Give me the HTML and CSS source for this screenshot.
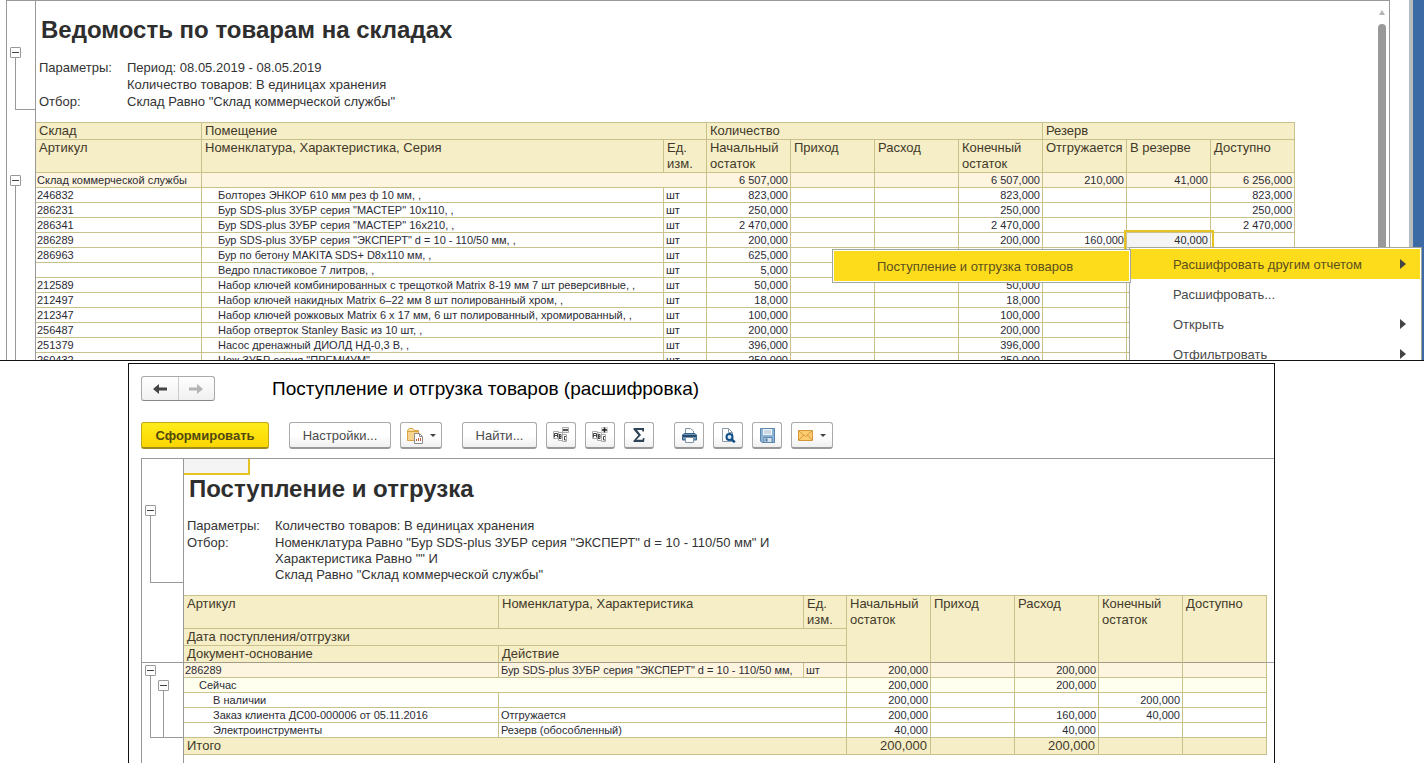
FILE: index.html
```html
<!DOCTYPE html>
<html lang="ru">
<head>
<meta charset="utf-8">
<title>Ведомость по товарам на складах</title>
<link rel="stylesheet" href="styles.css">
</head>
<body>
<section class="pane">
  <div class="frame">
    <div class="gutter gutter-main">
      <div class="group group-params"><button class="toggle" aria-label="Свернуть параметры"></button><span class="bracket bracket-closed"></span></div>
      <div class="group group-rows"><button class="toggle" aria-label="Свернуть склад"></button><span class="bracket"></span></div>
    </div>
    <div class="sheet sheet-main">
      <h1 class="title">Ведомость по товарам на складах</h1>
      <dl class="params">
        <dt>Параметры:</dt><dd>Период: 08.05.2019 - 08.05.2019</dd>
        <dt></dt><dd>Количество товаров: В единицах хранения</dd>
        <dt>Отбор:</dt><dd>Склад Равно "Склад коммерческой службы"</dd>
      </dl>
      <table class="grid">
        <colgroup><col class="c-art"><col><col class="c-unit"><col class="c-num"><col class="c-num"><col class="c-num"><col class="c-num"><col class="c-num"><col class="c-num"><col class="c-num"></colgroup>
        <thead>
          <tr><th>Склад</th><th colspan="2">Помещение</th><th colspan="4">Количество</th><th colspan="3">Резерв</th></tr>
          <tr class="tall"><th>Артикул</th><th>Номенклатура, Характеристика, Серия</th><th>Ед. изм.</th><th>Начальный остаток</th><th>Приход</th><th>Расход</th><th>Конечный остаток</th><th>Отгружается</th><th>В резерве</th><th>Доступно</th></tr>
        </thead>
        <tbody>
          <tr class="sum"><td>Склад коммерческой службы</td><td colspan="2"></td><td class="n">6 507,000</td><td></td><td></td><td class="n">6 507,000</td><td class="n">210,000</td><td class="n">41,000</td><td class="n">6 256,000</td></tr>
          <tr><td>246832</td><td class="in">Болторез ЭНКОР 610 мм рез ф 10 мм, ,</td><td>шт</td><td class="n">823,000</td><td></td><td></td><td class="n">823,000</td><td></td><td></td><td class="n">823,000</td></tr>
          <tr><td>286231</td><td class="in">Бур SDS-plus ЗУБР серия "МАСТЕР" 10х110, ,</td><td>шт</td><td class="n">250,000</td><td></td><td></td><td class="n">250,000</td><td></td><td></td><td class="n">250,000</td></tr>
          <tr><td>286341</td><td class="in">Бур SDS-plus ЗУБР серия "МАСТЕР" 16х210, ,</td><td>шт</td><td class="n">2 470,000</td><td></td><td></td><td class="n">2 470,000</td><td></td><td></td><td class="n">2 470,000</td></tr>
          <tr><td>286289</td><td class="in">Бур SDS-plus ЗУБР серия "ЭКСПЕРТ" d = 10 - 110/50 мм, ,</td><td>шт</td><td class="n">200,000</td><td></td><td></td><td class="n">200,000</td><td class="n">160,000</td><td class="n current">40,000</td><td></td></tr>
          <tr><td>286963</td><td class="in">Бур по бетону MAKITA SDS+ D8x110 мм, ,</td><td>шт</td><td class="n">625,000</td><td></td><td></td><td class="n">625,000</td><td></td><td></td><td></td></tr>
          <tr><td></td><td class="in">Ведро пластиковое 7 литров, ,</td><td>шт</td><td class="n">5,000</td><td></td><td></td><td class="n">5,000</td><td></td><td></td><td></td></tr>
          <tr><td>212589</td><td class="in">Набор ключей комбинированных с трещоткой Matrix 8-19 мм 7 шт реверсивные, ,</td><td>шт</td><td class="n">50,000</td><td></td><td></td><td class="n">50,000</td><td></td><td></td><td></td></tr>
          <tr><td>212497</td><td class="in">Набор ключей накидных Matrix 6–22 мм 8 шт полированный хром, ,</td><td>шт</td><td class="n">18,000</td><td></td><td></td><td class="n">18,000</td><td></td><td></td><td></td></tr>
          <tr><td>212347</td><td class="in">Набор ключей рожковых Matrix 6 х 17 мм, 6 шт полированный, хромированный, ,</td><td>шт</td><td class="n">100,000</td><td></td><td></td><td class="n">100,000</td><td></td><td></td><td></td></tr>
          <tr><td>256487</td><td class="in">Набор отверток Stanley Basic из 10 шт, ,</td><td>шт</td><td class="n">200,000</td><td></td><td></td><td class="n">200,000</td><td></td><td></td><td></td></tr>
          <tr><td>251379</td><td class="in">Насос дренажный ДИОЛД НД-0,3 В, ,</td><td>шт</td><td class="n">396,000</td><td></td><td></td><td class="n">396,000</td><td></td><td></td><td></td></tr>
          <tr><td>260432</td><td class="in">Нож ЗУБР серия "ПРЕМИУМ"</td><td>шт</td><td class="n">250,000</td><td></td><td></td><td class="n">250,000</td><td></td><td></td><td></td></tr>
        </tbody>
      </table>
    </div>
    <div class="scroll"><svg width="8" height="5" viewBox="0 0 8 5"><path d="M4 0 7 5H1z" fill="#b4b4b4"/></svg><span class="thumb"></span></div>
  </div>
  <div class="desktop"></div>

  <div class="menu context">
    <button class="item active">Расшифровать другим отчетом<svg class="more" width="6" height="10" viewBox="0 0 6 10"><path d="M0 0 6 5 0 10z"/></svg></button>
    <button class="item">Расшифровать...</button>
    <button class="item">Открыть<svg class="more" width="6" height="10" viewBox="0 0 6 10"><path d="M0 0 6 5 0 10z"/></svg></button>
    <button class="item">Отфильтровать<svg class="more" width="6" height="10" viewBox="0 0 6 10"><path d="M0 0 6 5 0 10z"/></svg></button>
  </div>
  <div class="menu submenu">
    <button class="item active">Поступление и отгрузка товаров</button>
  </div>
</section>

<section class="window">
  <header class="head">
    <div class="nav">
      <button aria-label="Назад"><svg width="14" height="10" viewBox="0 0 14 10"><path d="M0 5 6 0v3.500h8v3H6V10z" fill="#444"/></svg></button>
      <button aria-label="Вперед"><svg width="14" height="10" viewBox="0 0 14 10"><path d="M14 5 8 0v3.500H0v3h8V10z" fill="#b4b4b4"/></svg></button>
    </div>
    <h2 class="caption">Поступление и отгрузка товаров (расшифровка)</h2>
  </header>
  <div class="toolbar">
    <div class="set"><button class="btn primary">Сформировать</button></div>
    <div class="set">
      <button class="btn settings">Настройки...</button>
      <button class="btn drop" aria-label="Варианты отчета">
        <svg width="17" height="17" viewBox="0 0 17 17"><path d="M1.500 13.500v-10l1.500-2h4l1.500 2h4v2" fill="#f6d48d" stroke="#d9a441"/><path d="M1.500 4.500h11v9h-11z" fill="#f6d48d" stroke="#d9a441"/><path d="M3 2.500h4" stroke="#fff3d0"/><path d="M8.500 6.500h5l3 3v7h-8z" fill="#fff" stroke="#8b8b8b"/><path d="M13.500 6.500v3h3" fill="none" stroke="#8b8b8b"/><path d="M10.500 14v-2M12.500 14v-3M14.500 14v-3" stroke="#c45b3c"/></svg>
        <svg width="6" height="3" viewBox="0 0 6 3"><path d="M0 0h6L3 3z" fill="#444"/></svg>
      </button>
    </div>
    <div class="set">
      <button class="btn find">Найти...</button>
      <button class="btn icon" aria-label="Свернуть группы"><svg width="16" height="16" viewBox="0 0 16 16"><g fill="#fff" stroke="#aaa"><path d="M.5 4.500h5v7h-5zM5.500 5.500h4v8h-4zM9.500 7.500h4v7h-4z"/><path d="M9.500.5h6v5h-6z" fill="#eee"/></g><path d="M10 3h5" stroke="#222" stroke-width="1.500"/><path d="M1.500 10.500v-4h3v4M1.500 8.500h3M6.500 7v5M6.500 7.500H8v4H6.500M6.500 9.500H8M13 9.500h-1.500v3.500H13" fill="none" stroke="#444"/></svg></button>
      <button class="btn icon" aria-label="Развернуть группы"><svg width="16" height="16" viewBox="0 0 16 16"><g fill="#fff" stroke="#aaa"><path d="M.5 4.500h5v7h-5zM5.500 5.500h4v8h-4zM9.500 7.500h4v7h-4z"/><path d="M9.500.5h6v5h-6z" fill="#eee" stroke="#ccc"/></g><path d="M10 3h5M12.500.5v5" stroke="#222" stroke-width="1.500"/><path d="M1.500 10.500v-4h3v4M1.500 8.500h3M6.500 7v5M6.500 7.500H8v4H6.500M6.500 9.500H8M13 9.500h-1.500v3.500H13" fill="none" stroke="#444"/></svg></button>
      <button class="btn icon" aria-label="Сумма"><svg width="12" height="14" viewBox="0 0 12 14"><path d="M.5 0H11v3.500H9.500L9 2H4l4 5-4.500 4.700H9.500l.5-1.700h1.500L11 14H.5v-1.300L5.300 7.200.5 1.500z" fill="#2f4457"/></svg></button>
    </div>
    <div class="set">
      <button class="btn icon" aria-label="Печать"><svg width="15" height="15" viewBox="0 0 15 15"><path d="M3.500 6V.5h5l3 2.500v3" fill="#fff" stroke="#7d93a6"/><path d="M2 5.500h11l1.500 1.500v5H.5V7z" fill="#6d97bb" stroke="#35618a"/><path d="M1 8h13" stroke="#27496b" stroke-width="2"/><path d="M3.500 9.500h8v5h-8z" fill="#fff" stroke="#7d93a6"/></svg></button>
      <button class="btn icon" aria-label="Просмотр"><svg width="15" height="15" viewBox="0 0 15 15"><path d="M1.500.5h6l4 4v9h-10z" fill="#fff" stroke="#8a9aa8"/><path d="M7.500.5v4h4" fill="none" stroke="#8a9aa8"/><circle cx="8.500" cy="9" r="3" fill="#d8eefa" stroke="#0f4f86" stroke-width="2"/><path d="m10.800 11.300 3 3" stroke="#0f4f86" stroke-width="2.400"/></svg></button>
      <button class="btn icon" aria-label="Сохранить"><svg width="15" height="15" viewBox="0 0 15 15"><path d="M.5.500h14v14H2l-1.500-1.500z" fill="#8db3d4" stroke="#5a86ad"/><path d="M3 1h9v6H3z" fill="#eef5fb"/><path d="M4 3h7M4 5h7" stroke="#a9bccd"/><path d="M4 9.500h8v5H4z" fill="#d7e4ef" stroke="#5a86ad"/><path d="M5.500 10.500h2v3h-2z" fill="#47759f"/></svg></button>
      <button class="btn drop" aria-label="Отправить">
        <svg width="15" height="11" viewBox="0 0 15 11"><path d="M.5.500h14v10H.5z" fill="#fbcd70" stroke="#d8963a"/><path d="m1 1 6.500 5.500L14 1M1 10l4.500-5M14 10 9.500 5" fill="none" stroke="#d8963a"/></svg>
        <svg width="6" height="3" viewBox="0 0 6 3"><path d="M0 0h6L3 3z" fill="#444"/></svg>
      </button>
    </div>
  </div>
  <div class="report">
    <div class="gutter gutter-detail">
      <div class="frozen"><div class="group"><button class="toggle" aria-label="Свернуть параметры"></button><span class="bracket bracket-closed"></span></div></div>
      <div class="levels">
        <div class="group level-one"><button class="toggle" aria-label="Свернуть товар"></button><span class="bracket bracket-closed"></span></div>
        <div class="group level-two"><button class="toggle" aria-label="Свернуть дату"></button><span class="bracket bracket-closed"></span></div>
      </div>
    </div>
    <div class="sheet sheet-detail">
      <div class="corner"></div>
      <h1 class="title">Поступление и отгрузка</h1>
      <dl class="params">
        <dt>Параметры:</dt><dd>Количество товаров: В единицах хранения</dd>
        <dt>Отбор:</dt><dd class="multi">Номенклатура Равно "Бур SDS-plus ЗУБР серия "ЭКСПЕРТ" d = 10 - 110/50 мм" И<br>Характеристика Равно "" И<br>Склад Равно "Склад коммерческой службы"</dd>
      </dl>
      <table class="grid detail">
        <colgroup><col class="c-doc"><col><col class="c-unit"><col class="c-num"><col class="c-num"><col class="c-num"><col class="c-num"><col class="c-num"></colgroup>
        <thead>
          <tr class="tall"><th>Артикул</th><th>Номенклатура, Характеристика</th><th>Ед. изм.</th><th rowspan="3" class="edge">Начальный остаток</th><th rowspan="3" class="edge">Приход</th><th rowspan="3" class="edge">Расход</th><th rowspan="3" class="edge">Конечный остаток</th><th rowspan="3" class="edge last">Доступно</th></tr>
          <tr><th colspan="3">Дата поступления/отгрузки</th></tr>
          <tr><th class="edge">Документ-основание</th><th class="edge" colspan="2">Действие</th></tr>
        </thead>
        <tbody>
          <tr class="sum"><td>286289</td><td>Бур SDS-plus ЗУБР серия "ЭКСПЕРТ" d = 10 - 110/50 мм,</td><td>шт</td><td class="n">200,000</td><td></td><td class="n">200,000</td><td></td><td></td></tr>
          <tr class="date"><td class="in" colspan="3">Сейчас</td><td class="n">200,000</td><td></td><td class="n">200,000</td><td></td><td></td></tr>
          <tr><td class="in2">В наличии</td><td colspan="2"></td><td class="n">200,000</td><td></td><td></td><td class="n">200,000</td><td></td></tr>
          <tr><td class="in2">Заказ клиента ДС00-000006 от 05.11.2016</td><td colspan="2">Отгружается</td><td class="n">200,000</td><td></td><td class="n">160,000</td><td class="n">40,000</td><td></td></tr>
          <tr><td class="in2">Электроинструменты</td><td colspan="2">Резерв (обособленный)</td><td class="n">40,000</td><td></td><td class="n">40,000</td><td></td><td></td></tr>
        </tbody>
        <tfoot>
          <tr><th colspan="3">Итого</th><th class="n">200,000</th><th></th><th class="n">200,000</th><th></th><th></th></tr>
        </tfoot>
      </table>
    </div>
  </div>
</section>
</body>
</html>
```
FILE: styles.css
```css
* { box-sizing: border-box; }

body {
  margin: 0;
  height: 100vh;
  display: grid;
  grid-template-rows: minmax(0, 1fr) auto;
  overflow: hidden;
  background: #fff;
  color: #333;
  font-family: "Liberation Sans", Arial, sans-serif;
  font-size: 13px;
}

button { font: inherit; color: inherit; padding: 0; margin: 0; }
svg { display: block; flex: none; }

/* Upper report pane */
.pane {
  position: relative;
  display: flex;
  overflow: hidden;
  padding-left: 6px;
  border-bottom: 1px solid #111;
}
.frame {
  flex: 1;
  min-width: 0;
  display: flex;
  border: 1px solid #999;
  border-bottom: 0;
  margin-right: 19px;
}
.desktop { width: 15px; background: #3b6aa5; border-left: 4px solid #b9bcbe; }

.sheet { flex: 1; min-width: 0; }
.sheet-main { padding-right: 83px; }
.title { margin: 0; padding-left: 5px; font-size: 24px; line-height: 28px; color: #2e2e2e; white-space: nowrap; }
.sheet-main .title { padding-top: 15px; margin-bottom: 15px; }

.params { margin: 0 0 12px; padding-left: 3px; display: grid; grid-template-columns: 88px 1fr; font-size: 13px; line-height: 17px; white-space: nowrap; }
.params dt, .params dd { margin: 0; }
.params .multi { padding-top: 1px; line-height: 16px; }

/* Outline gutter */
.gutter { flex: none; border-right: 1px solid #999; }
.gutter-main { width: 29px; padding: 46px 0 0 3px; display: flex; flex-direction: column; }
.group { display: flex; flex-direction: column; }
.group-params { height: 63px; }
.group-rows { flex: 1; margin-top: 65px; }
.toggle {
  width: 11px;
  height: 11px;
  flex: none;
  border: 1px solid #999;
  border-radius: 1px;
  background: linear-gradient(#444, #444) center / 7px 1px no-repeat #fff;
}
.bracket { flex: 1; margin-left: 5px; border-left: 1px solid #999; }
.bracket-closed { border-bottom: 1px solid #999; }

/* Spreadsheet grid */
.grid { width: 100%; table-layout: fixed; border-collapse: separate; border-spacing: 0; border-top: 1px solid #c9c18c; }
.c-art { width: 166px; }
.c-doc { width: 315px; }
.c-unit { width: 43px; }
.c-num { width: 84px; }
.grid th, .grid td { border-right: 1px solid #c9c18c; border-bottom: 1px solid #c9c18c; text-align: left; vertical-align: top; }
.grid th { height: 17px; padding: 0 0 0 3px; background: #f5eec6; color: #43392a; font-size: 13px; font-weight: 400; line-height: 16px; }
.grid .tall th { height: 33px; }
.grid td { height: 15px; padding: 0 2px 0 1px; font-size: 11px; line-height: 14px; color: #2b2b33; white-space: nowrap; }
.grid .sum td { background: #fdf5df; }
.grid .date td { background: #fffff0; }
.grid td + td:not(.n) { padding-left: 2px; }
.grid td + td.in { padding-left: 16px; }
.grid .in { padding-left: 15px; }
.grid .in2 { padding-left: 29px; }
.grid td.n { text-align: right; }
.grid th.n { text-align: right; padding-right: 3px; }
.grid .current { background: #f4f4f4; outline: 2px solid #e6c322; outline-offset: 1px; }
.grid .edge { border-bottom-color: #a39c86; }
.grid .last { position: relative; }
.grid .last::after { content: ""; position: absolute; left: 100%; bottom: -1px; width: 8px; border-bottom: 1px solid #a3a0a8; }

.scroll { width: 11px; padding: 9px 3px 0 0; display: flex; flex-direction: column; gap: 9px; }
.thumb { flex: 1; background: #999; border-radius: 4px 4px 0 0; }

/* Context menus */
.menu { position: absolute; padding: 1px; border: 1px solid #a3a79b; background: #fff; }
.context { top: 247px; right: 2px; width: 293px; }
.submenu { top: 249px; right: 293px; width: 299px; }
.item { display: flex; align-items: center; width: 100%; height: 30px; padding: 0 14px 0 42px; border: 0; background: none; color: #4a4a4a; text-align: left; white-space: nowrap; }
.item.active { background: #fddc1b; color: #5c4f1e; }
.submenu .item { padding-left: 43px; }
.more { margin-left: auto; fill: #444; }

/* Drill-down window */
.window { margin: 2px 149px 0 128px; padding: 12px 0 0 12px; border: 1px solid #111; border-bottom: 0; }
.head { display: flex; align-items: center; gap: 57px; height: 25px; }
.nav { display: flex; width: 74px; height: 25px; border: 1px solid #aaa; border-bottom-color: #888; border-radius: 3px; background: linear-gradient(#fff, #f0f0f0); }
.nav button { flex: 1; display: flex; align-items: center; justify-content: center; border: 0; background: none; }
.nav button + button { border-left: 1px solid #ccc; }
.caption { margin: 0; font-size: 19px; font-weight: 400; color: #000; white-space: nowrap; }

.toolbar { display: flex; gap: 20px; margin: 21px 0 9px; }
.set { display: flex; gap: 9px; }
.btn { height: 27px; display: flex; align-items: center; justify-content: center; border: 1px solid #aaa; border-bottom: 2px solid #999; border-radius: 3px; background: linear-gradient(#fff 50%, #f0f0f0); color: #4a4a4a; }
.primary { width: 128px; border-color: #c4a815; border-bottom-color: #9f8a22; background: linear-gradient(#ffec1a, #fbd600); color: #51480f; font-weight: 700; }
.settings { width: 102px; }
.find { width: 75px; }
.icon { width: 30px; }
.drop { width: 42px; gap: 7px; }

.report { display: flex; padding-bottom: 8px; border-top: 1px solid #999; border-left: 1px solid #999; }
.gutter-detail { width: 42px; margin-bottom: -8px; }
.frozen { height: 204px; padding: 46px 0 0 3px; border-bottom: 1px solid #999; }
.frozen .group { height: 78px; }
.levels { display: flex; padding: 2px 0 0 3px; height: 75px; }
.level-one { width: 18px; }
.level-two { flex: 1; padding-top: 15px; margin-left: -5px; }
.sheet-detail { padding-right: 7px; }
.corner { width: 66px; height: 16px; background: #f4f4f4; border: 2px solid #e6c322; border-top: 0; border-left: 0; }
.sheet-detail .title { margin-bottom: 14px; }
.sheet-detail .params { margin-bottom: 12px; }
```
